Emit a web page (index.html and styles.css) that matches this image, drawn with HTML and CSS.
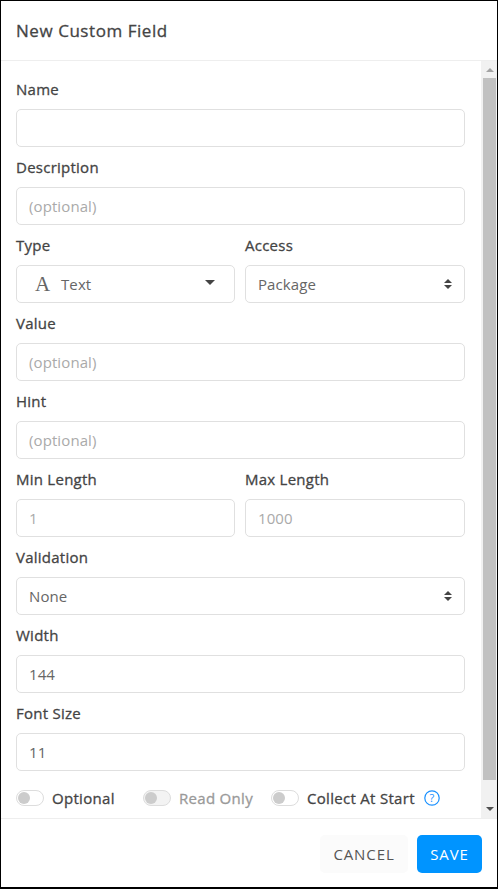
FILE: index.html
```html
<!DOCTYPE html>
<html lang="en">
<head>
<meta charset="UTF-8">
<title>New Custom Field</title>
<link rel="stylesheet" href="styles.css">
</head>
<body>
<div class="dialog">
    <div class="dialog-header">New Custom Field</div>

    <div class="dialog-body">
        <form class="form">
            <div class="field">
                <label>Name</label>
                <input class="input" type="text">
            </div>
            <div class="field">
                <label>Description</label>
                <input class="input" type="text" placeholder="(optional)">
            </div>
            <div class="row">
                <div class="field">
                    <label>Type</label>
                    <div class="input type-select">
                        <span class="type-glyph">A</span>
                        <span class="type-name">Text</span>
                        <span class="caret"></span>
                    </div>
                </div>
                <div class="field">
                    <label>Access</label>
                    <div class="input select">
                        <span>Package</span>
                        <svg class="updown" width="8" height="10" viewBox="0 0 8 10"><path d="M4 0L8 4H0Z M0 6H8L4 10Z" fill="#444"/></svg>
                    </div>
                </div>
            </div>
            <div class="field">
                <label>Value</label>
                <input class="input" type="text" placeholder="(optional)">
            </div>
            <div class="field">
                <label>Hint</label>
                <input class="input" type="text" placeholder="(optional)">
            </div>
            <div class="row">
                <div class="field">
                    <label>Min Length</label>
                    <input class="input" type="text" placeholder="1">
                </div>
                <div class="field">
                    <label>Max Length</label>
                    <input class="input" type="text" placeholder="1000">
                </div>
            </div>
            <div class="field">
                <label>Validation</label>
                <div class="input select">
                    <span>None</span>
                    <svg class="updown" width="8" height="10" viewBox="0 0 8 10"><path d="M4 0L8 4H0Z M0 6H8L4 10Z" fill="#444"/></svg>
                </div>
            </div>
            <div class="field">
                <label>Width</label>
                <input class="input" type="text" value="144">
            </div>
            <div class="field">
                <label>Font Size</label>
                <input class="input" type="text" value="11">
            </div>
            <div class="toggles">
                <div class="toggle-item">
                    <span class="toggle"></span>
                    <span>Optional</span>
                </div>
                <div class="toggle-item disabled">
                    <span class="toggle"></span>
                    <span>Read Only</span>
                </div>
                <div class="toggle-item">
                    <span class="toggle"></span>
                    <span>Collect At Start</span>
                    <svg class="help" width="16" height="16" viewBox="0 0 16 16"><circle cx="8" cy="8" r="7.2" fill="none" stroke="#1890ff" stroke-width="1.2"/><text x="8" y="12" text-anchor="middle" class="help-mark">?</text></svg>
                </div>
            </div>
        </form>

        <div class="scrollbar">
            <div class="arrow-up"></div>
            <div class="thumb"></div>
            <div class="arrow-down"></div>
        </div>
    </div>

    <div class="dialog-footer">
        <button type="button" class="btn btn-cancel">CANCEL</button>
        <button type="button" class="btn btn-save">SAVE</button>
    </div>
</div>
</body>
</html>
```

FILE: styles.css
```css
html, body {
    height: 100%;
}
body {
    margin: 0;
    padding: 0;
    font-family: "Open Sans", sans-serif;
    font-size: 15px;
    color: #444;
    background-color: #fff;
}
.dialog {
    box-sizing: border-box;
    width: 498px;
    height: 889px;
    border: 1px solid #000;
    border-bottom-width: 2px;
    display: flex;
    flex-direction: column;
    background-color: #fff;
}

/* Header */
.dialog-header {
    flex: none;
    height: 60px;
    box-sizing: border-box;
    padding: 0 15px;
    display: flex;
    align-items: center;
    font-size: 17px;
    color: #444;
    letter-spacing: 0.55px;
    -webkit-text-stroke: 0.3px #444;
    border-bottom: 1px solid #eee;
}

/* Body */
.dialog-body {
    flex: 1;
    display: flex;
    min-height: 0;
}
.form {
    flex: 1;
    min-width: 0;
    box-sizing: border-box;
    padding: 18px 16px 0 15px;
}
.scrollbar {
    width: 16px;
    flex: none;
    background-color: #f1f1f1;
    display: flex;
    flex-direction: column;
    align-items: flex-start;
}
.thumb {
    flex: none;
    width: 13px;
    height: 702px;
    margin: 6px 0 0 2px;
    background-color: #c1c1c1;
}
.arrow-up,
.arrow-down {
    width: 0;
    height: 0;
    margin-left: 5px;
    border-left: 4px solid transparent;
    border-right: 4px solid transparent;
}
.arrow-up {
    margin-top: 7px;
    border-bottom: 4px solid #a3a3a3;
}
.arrow-down {
    margin-top: auto;
    margin-bottom: 7px;
    border-top: 4px solid #505050;
}

/* Fields */
.field {
    display: block;
    min-width: 0;
    margin-bottom: 10px;
}
.field label {
    display: block;
    height: 20px;
    line-height: 21px;
    margin-bottom: 10px;
    letter-spacing: 0.25px;
    -webkit-text-stroke: 0.3px #444;
    color: #444;
}
.row {
    display: grid;
    grid-template-columns: 219px 220px;
    gap: 10px;
}
.input {
    display: block;
    box-sizing: border-box;
    width: 100%;
    height: 38px;
    padding: 0 12px;
    border: 1px solid #e0e0e0;
    border-radius: 5px;
    background-color: #fff;
    font-family: "Open Sans", sans-serif;
    font-size: 15px;
    letter-spacing: 0.1px;
    color: #666;
    outline: none;
}
.input::placeholder {
    color: #aaa;
    opacity: 1;
}
.select,
.type-select {
    display: flex;
    align-items: center;
}
.select {
    justify-content: space-between;
}
.type-select {
    padding-left: 18px;
}
.type-glyph {
    font-family: "Liberation Serif", serif;
    font-size: 21px;
    width: 26px;
    color: #666;
}
.type-name {
    flex: 1;
}
.caret {
    width: 0;
    height: 0;
    margin-right: 7px;
    margin-bottom: 4px;
    border-left: 5px solid transparent;
    border-right: 5px solid transparent;
    border-top: 5px solid #444;
}

/* Toggles */
.toggles {
    display: grid;
    grid-template-columns: 127px 128px auto;
    margin-top: 17px;
    letter-spacing: 0.3px;
    -webkit-text-stroke: 0.3px #444;
}
.toggle-item {
    display: flex;
    align-items: center;
    gap: 8px;
    height: 20px;
}
.toggle-item.disabled {
    color: #999;
    -webkit-text-stroke: 0.3px #999;
}
.toggle {
    box-sizing: border-box;
    flex: none;
    width: 28px;
    height: 16px;
    border: 1px solid #ddd;
    border-radius: 8px;
    background-color: #fff;
    position: relative;
}
.toggle::after {
    content: "";
    position: absolute;
    left: 1px;
    top: 1px;
    width: 12px;
    height: 12px;
    border-radius: 50%;
    background-color: #ccc;
}
.disabled .toggle {
    background-color: #f3f3f3;
}
.help {
    flex: none;
    margin-left: 1px;
}
.help-mark {
    font-size: 11px;
    font-weight: 400;
    fill: #1890ff;
    stroke: none;
}

/* Footer */
.dialog-footer {
    flex: none;
    height: 69px;
    box-sizing: border-box;
    border-top: 1px solid #eee;
    padding: 16px 15px 0 0;
    display: flex;
    justify-content: flex-end;
    align-items: flex-start;
    gap: 9px;
}
.btn {
    height: 38px;
    border: none;
    border-radius: 5px;
    padding: 0;
    font-family: "Open Sans", sans-serif;
    font-size: 15px;
    letter-spacing: 0.9px;
    cursor: pointer;
}
.btn-cancel {
    width: 88px;
    background-color: #fbfbfb;
    color: #555;
}
.btn-save {
    width: 65px;
    background-color: #0094ff;
    color: #fff;
}
```
